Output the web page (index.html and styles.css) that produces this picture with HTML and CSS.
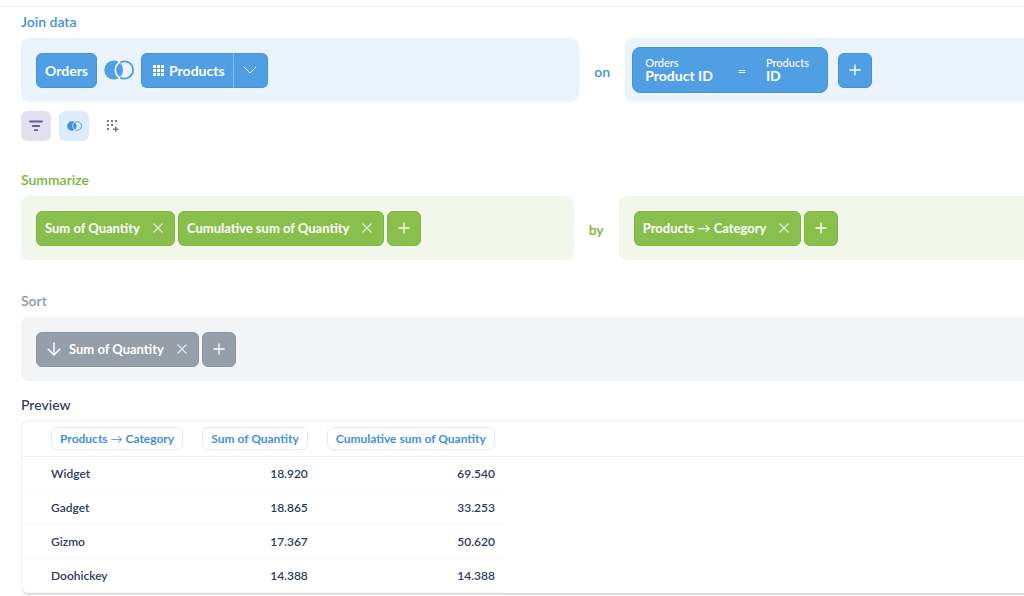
FILE: index.html
```html
<!DOCTYPE html>
<html lang="en">
<head>
  <meta charset="UTF-8" />
  <title>Orders + Products</title>
  <link rel="stylesheet" href="styles.css">
</head>
<body>

  <!-- shared icons -->
  <svg class="sprite" aria-hidden="true">
    <mask id="join-gap" maskUnits="userSpaceOnUse" x="0" y="0" width="30" height="20">
      <rect width="30" height="20" fill="#fff" />
      <circle cx="20.300" cy="10" r="9" fill="none" stroke="#000" stroke-width="1.800" />
    </mask>
    <symbol id="icon-plus" viewBox="0 0 12 12">
      <path d="M6 .5v11M.5 6h11" fill="none" stroke="currentColor" stroke-width="1.3" />
    </symbol>
    <symbol id="icon-close" viewBox="0 0 10 10">
      <path d="M.5.5l9 9M9.5.5l-9 9" fill="none" stroke="currentColor" stroke-width="1.1" />
    </symbol>
    <symbol id="icon-join" viewBox="0 0 30 20">
      <circle cx="9.700" cy="10" r="9.400" fill="currentColor" mask="url(#join-gap)" />
      <path d="M16.400 2.400A8.600 8.600 0 1 1 16.400 17.600" fill="none" stroke="currentColor" stroke-width="1.800" />
    </symbol>
  </svg>

  <main class="notebook">

    <section class="step step-join">
      <h2>Join data</h2>
      <div class="step-row join-row">
        <div class="card">
          <button class="chip">Orders</button>
          <button class="join-type" aria-label="Left join"><svg width="30" height="20"><use href="#icon-join" /></svg></button>
          <div class="chip-group">
            <button class="chip chip-left">
              <svg width="11" height="11" viewBox="0 0 11 11" fill="currentColor">
                <path d="M0 0h3v3H0zM4 0h3v3H4zM8 0h3v3H8zM0 4h3v3H0zM4 4h3v3H4zM8 4h3v3H8zM0 8h3v3H0zM4 8h3v3H4zM8 8h3v3H8z" />
              </svg>
              Products
            </button>
            <button class="chip chip-right" aria-label="Pick columns">
              <svg width="14" height="8" viewBox="0 0 14 8" fill="none" stroke="currentColor" stroke-width="1"><path d="M.8.8L7 7l6.200-6.200" /></svg>
            </button>
          </div>
        </div>
        <span class="word">on</span>
        <div class="card card-open card-condition">
          <div class="condition">
            <button><small>Orders</small>Product ID</button>
            <span class="operator">=</span>
            <button><small>Products</small>ID</button>
          </div>
          <button class="chip chip-add" aria-label="Add condition"><svg width="12" height="12"><use href="#icon-plus" /></svg></button>
        </div>
      </div>
      <div class="actions">
        <button class="action action-filter" aria-label="Filter">
          <svg width="14" height="12" viewBox="0 0 14 12" fill="none" stroke="currentColor" stroke-width="1.8" stroke-linecap="round"><path d="M1 1.500h12M3.800 6h6.400M5.800 10.200h2.400" /></svg>
        </button>
        <button class="action action-join" aria-label="Join data"><svg width="15" height="10"><use href="#icon-join" /></svg></button>
        <button class="action action-column" aria-label="Custom column">
          <svg width="12" height="12" viewBox="0 0 12 12" fill="currentColor">
            <path d="M0 0h2v2H0zM4 0h2v2H4zM8 0h2v2H8zM0 4h2v2H0zM4 4h2v2H4zM0 8h2v2H0zM8 6.500h1.400v2.100h2.100V10H9.400v2.000H8V10H6V8.600h2z" />
          </svg>
        </button>
      </div>
    </section>

    <section class="step step-summarize">
      <h2>Summarize</h2>
      <div class="step-row summarize-row">
        <div class="card">
          <button class="chip">Sum of Quantity <svg class="close" width="10" height="10"><use href="#icon-close" /></svg></button>
          <button class="chip">Cumulative sum of Quantity <svg class="close" width="10" height="10"><use href="#icon-close" /></svg></button>
          <button class="chip chip-add" aria-label="Add metric"><svg width="12" height="12"><use href="#icon-plus" /></svg></button>
        </div>
        <span class="word">by</span>
        <div class="card card-open">
          <button class="chip"><span>Products <span class="arrow">→</span> Category</span> <svg class="close" width="10" height="10"><use href="#icon-close" /></svg></button>
          <button class="chip chip-add" aria-label="Add grouping"><svg width="12" height="12"><use href="#icon-plus" /></svg></button>
        </div>
      </div>
    </section>

    <section class="step step-sort">
      <h2>Sort</h2>
      <div class="card card-open">
        <button class="chip">
          <svg class="direction" width="14" height="14" viewBox="0 0 14 14" fill="none" stroke="currentColor" stroke-width="1.500"><path d="M7 .5v12.300M.8 6.800L7 13l6.200-6.200" /></svg>
          Sum of Quantity <svg class="close" width="10" height="10"><use href="#icon-close" /></svg>
        </button>
        <button class="chip chip-add" aria-label="Add sort"><svg width="12" height="12"><use href="#icon-plus" /></svg></button>
      </div>
    </section>

    <section class="preview">
      <h2>Preview</h2>
      <div class="preview-box">
        <table>
          <thead>
            <tr>
              <th><span class="column">Products <span class="arrow">→</span> Category</span></th>
              <th><span class="column">Sum of Quantity</span></th>
              <th><span class="column">Cumulative sum of Quantity</span></th>
              <th class="filler"></th>
            </tr>
          </thead>
          <tbody>
            <tr><td>Widget</td><td>18.920</td><td>69.540</td></tr>
            <tr><td>Gadget</td><td>18.865</td><td>33.253</td></tr>
            <tr><td>Gizmo</td><td>17.367</td><td>50.620</td></tr>
            <tr><td>Doohickey</td><td>14.388</td><td>14.388</td></tr>
          </tbody>
        </table>
      </div>
    </section>

  </main>

</body>
</html>
```
FILE: styles.css
```css
* {
  box-sizing: border-box;
}

body {
  margin: 0;
  padding-top: 6px;
  font-family: Lato, "Liberation Sans", sans-serif;
  font-size: 14px;
  color: #2e3a5c;
  background-color: #fff;
}

button {
  padding: 0;
  border: none;
  background: none;
  color: inherit;
  font: inherit;
  cursor: pointer;
}

svg {
  display: block;
  flex-shrink: 0;
}

.sprite {
  position: absolute;
  width: 0;
  height: 0;
}

.notebook {
  padding: 6px 0 0 21px;
  border-top: 1px solid #eeeff0;
}

h2 {
  margin: 0 0 7px;
  font-size: 14px;
  font-weight: 600;
  line-height: 18px;
}

.step-join {
  --main: #509ee3;
  --edge: #4493dc;
  --tint: #ebf4fc;
  color: #3f91dc;
}

.step-summarize {
  --main: #88bf4d;
  --edge: #7db83c;
  --tint: #f2f7ec;
  color: #78b535;
}

.step-sort {
  --main: #949faa;
  --edge: #8a97a3;
  --tint: #f3f4f6;
  color: #8c98a5;
}

.step-join {
  margin-bottom: 30px;
}

.step-summarize {
  margin-bottom: 32px;
}

.step-sort {
  margin-bottom: 15px;
}

.step-row {
  display: grid;
  align-items: center;
}

.join-row {
  grid-template-columns: 7fr auto 5fr;
}

.summarize-row {
  grid-template-columns: 15fr auto 11fr;
}

.word {
  padding: 2px 15px 0;
  font-weight: 600;
}

.card {
  display: flex;
  align-items: center;
  gap: 3px;
  min-height: 64px;
  padding: 0 15px;
  border-radius: 8px;
  background-color: var(--tint);
}

.card-open {
  border-radius: 8px 0 0 8px;
}

.card-condition {
  gap: 10px;
  padding-left: 7px;
}

.chip {
  display: flex;
  align-items: center;
  height: 35px;
  padding: 0 8px;
  border: 1px solid var(--edge);
  border-radius: 6px;
  background-color: var(--main);
  color: #fff;
  font-weight: 700;
  white-space: nowrap;
}

.step-summarize .chip,
.step-sort .chip {
  font-size: 13px;
}

.step .chip-add {
  justify-content: center;
  width: 34px;
  padding: 0;
}

.arrow {
  font-weight: 400;
}

.close {
  margin: 0 3px 0 13px;
  opacity: 0.75;
}

.direction {
  margin: 0 8px 0 2px;
}

.join-type {
  margin: 0 4px;
  color: var(--main);
}

.chip-group {
  display: flex;
}

.chip-left {
  gap: 5px;
  padding-left: 11px;
  border-right: none;
  border-radius: 6px 0 0 6px;
}

.chip-right {
  justify-content: center;
  width: 35px;
  padding: 0;
  border-left-color: #85bbec;
  border-radius: 0 6px 6px 0;
}

.condition {
  display: flex;
  align-items: center;
  height: 46px;
  padding: 0 18px 0 12px;
  border: 1px solid var(--edge);
  border-radius: 8px;
  background-color: var(--main);
  color: #fff;
}

.condition button {
  font-weight: 700;
  line-height: 14px;
  text-align: left;
}

.condition small {
  display: block;
  font-size: 11px;
  font-weight: 500;
  line-height: 12px;
}

.operator {
  padding: 0 20px 0 25px;
}

.actions {
  display: flex;
  gap: 8px;
  margin-top: 9px;
}

.action {
  display: flex;
  align-items: center;
  justify-content: center;
  width: 30px;
  height: 30px;
  border-radius: 6px;
}

.action-filter {
  background-color: #e3e1ef;
  color: #6659ab;
}

.action-join {
  background-color: #dcecfa;
}

.action-column {
  width: 32px;
  color: #6f7b8b;
}

.preview h2 {
  margin-bottom: 6px;
  font-weight: 500;
}

.preview-box {
  overflow: hidden;
  border: 1px solid #eeeff0;
  border-right: none;
  border-bottom: 2px solid #dfdfdf;
  border-radius: 8px 0 0 8px;
}

table {
  width: 100%;
  border-collapse: separate;
  border-spacing: 0;
  font-size: 12px;
  font-weight: 600;
}

th {
  width: 1px;
  height: 36px;
  padding: 0 9px 0 10px;
  border-bottom: 1px solid #eeeff0;
  font-weight: 700;
  text-align: right;
}

.column {
  display: inline-block;
  padding: 3px 8px;
  border: 1px solid #dcecfb;
  border-radius: 6px;
  color: #3f91dc;
  line-height: 15px;
  white-space: nowrap;
}

td {
  height: 34px;
  padding: 0 9px 0 10px;
  border-bottom: 1px solid #f9f9fa;
  text-align: right;
}

th:first-child,
td:first-child {
  padding-left: 29px;
  text-align: left;
}

th.filler {
  width: auto;
}
```
